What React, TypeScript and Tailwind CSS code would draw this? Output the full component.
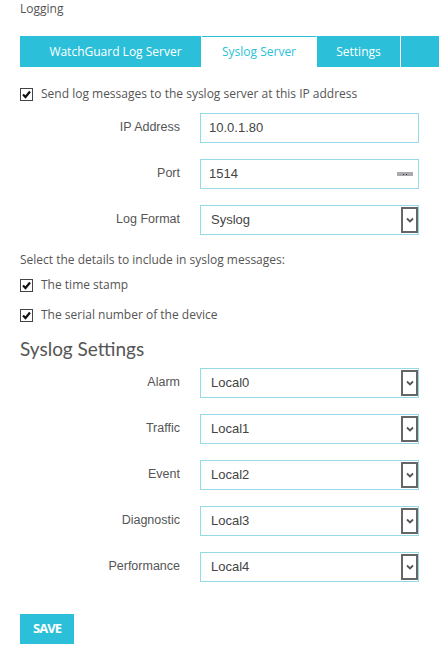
import { useState } from "react";

const CYAN = "#2bbfd9";

const Check = ({ checked, onToggle }: { checked: boolean; onToggle: () => void }) => (
  <button
    type="button"
    onClick={onToggle}
    className="w-[13px] h-[13px] border border-[#444] bg-white flex items-center justify-center shrink-0"
  >
    {checked && (
      <svg width="11" height="11" viewBox="0 0 11 11">
        <path d="M2 5.5 L4.5 8 L9 2.5" fill="none" stroke="#111" strokeWidth="2.2" />
      </svg>
    )}
  </button>
);

const Row = ({ label, children }: { label: string; children: React.ReactNode }) => (
  <div className="flex items-start">
    <div className="w-[160px] pt-[5px] text-right text-[12.5px] text-[#555] font-['Liberation_Sans',Arial,sans-serif]">
      {label}
    </div>
    <div className="ml-[20px] w-[219px]">{children}</div>
  </div>
);

const SelectBox = ({ value }: { value: string }) => (
  <div className="relative h-[30px] border border-[#93dbe7] bg-white flex items-center pl-[10px] text-[13px] text-[#444] font-['Liberation_Sans',Arial,sans-serif]">
    {value}
    <div className="absolute right-0 top-[1px] bottom-[1px] w-[17px] border-2 border-[#666] bg-white flex items-center justify-center">
      <svg width="8" height="6" viewBox="0 0 8 6">
        <path d="M1 1.5 L4 4.5 L7 1.5" fill="none" stroke="#555" strokeWidth="1.8" />
      </svg>
    </div>
  </div>
);

export default function App() {
  const [send, setSend] = useState(true);
  const [stamp, setStamp] = useState(true);
  const [serial, setSerial] = useState(true);
  const [tab, setTab] = useState(1);
  const tabs = [
    { name: "WatchGuard Log Server", w: "w-[182px] pl-[10px]" },
    { name: "Syslog Server", w: "w-[115px]" },
    { name: "Settings", w: "w-[84px]" },
  ];

  return (
    <div className="min-h-screen bg-white pl-5 pr-5 font-['Open_Sans',sans-serif] text-[#555]">
      <div className="pt-[1px] text-[12px] leading-[15px]">Logging</div>

      {/* Tabs */}
      <div className="mt-[20px] -mr-5 h-[31px] flex bg-[#2bbfd9]">
        {tabs.map((t, i) => (
          <button
            key={t.name}
            onClick={() => setTab(i)}
            className={`${t.w} h-full text-[12px] border-r border-white ${
              tab === i ? "bg-white text-[#2bbfd9] border-t border-t-[#2bbfd9]" : "text-white"
            }`}
          >
            {t.name}
          </button>
        ))}
        <div className="flex-1" />
      </div>

      <label className="mt-[18px] flex items-center gap-[8px] text-[12px] leading-[18px]">
        <Check checked={send} onToggle={() => setSend(!send)} />
        Send log messages to the syslog server at this IP address
      </label>

      <div className="mt-[10px] flex flex-col gap-[16px]">
        <Row label="IP Address">
          <div className="h-[30px] border border-[#93dbe7] flex items-center pl-[8px] text-[13px] text-[#444] font-['Liberation_Sans',Arial,sans-serif]">
            10.0.1.80
          </div>
        </Row>
        <Row label="Port">
          <div className="relative h-[30px] border border-[#93dbe7] flex items-center pl-[8px] text-[13px] text-[#444] font-['Liberation_Sans',Arial,sans-serif]">
            1514
            <div className="absolute right-[5px] top-[12px] w-[16px] h-[4px] bg-[#a9a9ae] flex items-center justify-center gap-[2px]">
              <span className="w-px h-px bg-[#333]" />
              <span className="w-px h-px bg-[#333]" />
            </div>
          </div>
        </Row>
        <Row label="Log Format">
          <SelectBox value="Syslog" />
        </Row>
      </div>

      <div className="mt-[16px] text-[12px] leading-[18px]">Select the details to include in syslog messages:</div>
      <label className="mt-[7px] flex items-center gap-[8px] text-[12px] leading-[18px]">
        <Check checked={stamp} onToggle={() => setStamp(!stamp)} />
        The time stamp
      </label>
      <label className="mt-[12px] flex items-center gap-[8px] text-[12px] leading-[18px]">
        <Check checked={serial} onToggle={() => setSerial(!serial)} />
        The serial number of the device
      </label>

      <h2 className="mt-[13px] text-[19px] leading-[24px] font-['Lato',sans-serif] text-[#555]">Syslog Settings</h2>

      <div className="mt-[7px] flex flex-col gap-[16px]">
        {[
          ["Alarm", "Local0"],
          ["Traffic", "Local1"],
          ["Event", "Local2"],
          ["Diagnostic", "Local3"],
          ["Performance", "Local4"],
        ].map(([l, v]) => (
          <Row key={l} label={l}>
            <SelectBox value={v} />
          </Row>
        ))}
      </div>

      <button
        className="mt-[32px] w-[54px] h-[30px] text-white text-[13px] font-bold tracking-[-1px] font-['Open_Sans',sans-serif]"
        style={{ backgroundColor: CYAN }}
      >
        SAVE
      </button>
    </div>
  );
}
